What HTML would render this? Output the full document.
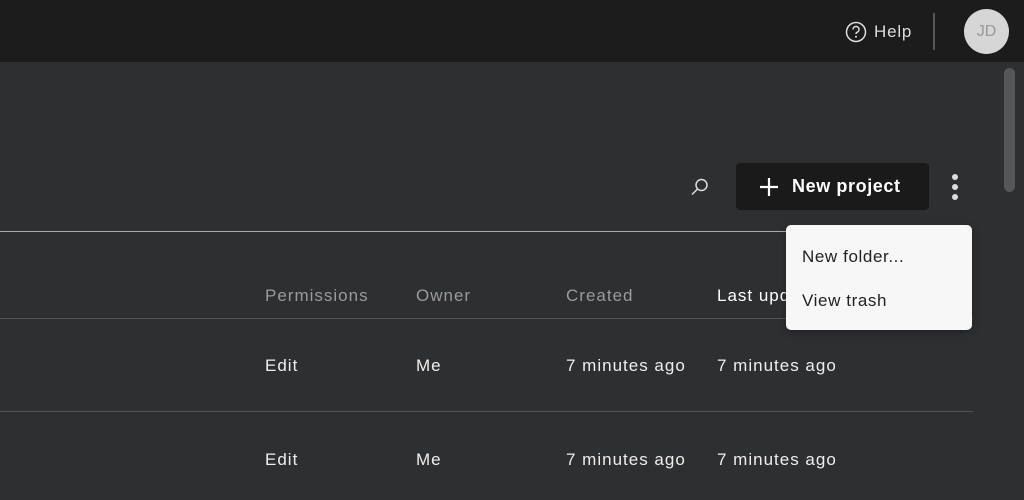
<!DOCTYPE html>
<html><head><style>
*{margin:0;padding:0;box-sizing:border-box}
body{width:1024px;height:500px;background:#2e2f31;font-family:"Liberation Sans",sans-serif;position:relative;overflow:hidden;color:#eee}
.top{position:absolute;left:0;top:0;width:1024px;height:62px;background:#1c1c1c}
.abs{position:absolute;white-space:nowrap}
.line{position:absolute;height:1px}
.t{font-size:17px;letter-spacing:1px}
</style></head><body>
<div class="top"></div>
<svg class="abs" style="left:845px;top:21px" width="22" height="22" viewBox="0 0 22 22"><circle cx="11" cy="11" r="9.5" fill="none" stroke="#ddd" stroke-width="1.5"/><path d="M8 8.5a3 3 0 1 1 4 2.8c-.8.4-1 .9-1 1.7" fill="none" stroke="#ddd" stroke-width="1.5"/><circle cx="11" cy="15.8" r="1" fill="#ddd"/></svg>
<div class="abs t" style="left:874px;top:22px;color:#ddd;letter-spacing:.8px">Help</div>
<div class="line" style="left:933px;top:13px;width:2px;height:37px;background:#555"></div>
<div class="abs" style="left:964px;top:9px;width:45px;height:45px;border-radius:50%;background:#d6d6d6;color:#999;font-size:16px;text-align:center;line-height:45px">JD</div>
<div class="abs" style="left:1004px;top:68px;width:11px;height:124px;border-radius:6px;background:#55575a"></div>
<svg class="abs" style="left:689px;top:176px" width="22" height="22" viewBox="0 0 22 22"><circle cx="12.5" cy="9" r="5.5" fill="none" stroke="#ddd" stroke-width="1.5"/><path d="M8.5 13 L3 18.5" stroke="#ddd" stroke-width="1.5"/></svg>
<div class="abs" style="left:736px;top:163px;width:193px;height:47px;border-radius:4px;background:#1a1a1a"></div>
<svg class="abs" style="left:758px;top:176px" width="22" height="22"><path d="M11 2v18M2 11h18" stroke="#fff" stroke-width="2.2"/></svg>
<div class="abs" style="left:792px;top:176px;font-size:18px;font-weight:bold;color:#fff;letter-spacing:.6px">New project</div>
<div class="abs" style="left:952px;top:174px;width:6px;height:6px;border-radius:50%;background:#ddd"></div>
<div class="abs" style="left:952px;top:184px;width:6px;height:6px;border-radius:50%;background:#ddd"></div>
<div class="abs" style="left:952px;top:194px;width:6px;height:6px;border-radius:50%;background:#ddd"></div>
<div class="line" style="left:0;top:231px;width:790px;background:#aaa"></div>
<div class="abs t" style="left:265px;top:286px;color:#9a9a9a">Permissions</div>
<div class="abs t" style="left:416px;top:286px;color:#9a9a9a">Owner</div>
<div class="abs t" style="left:566px;top:286px;color:#9a9a9a">Created</div>
<div class="abs t" style="left:717px;top:286px;color:#fff">Last updated</div>
<div class="line" style="left:0;top:318px;width:973px;background:#555"></div>
<div class="abs t" style="left:265px;top:356px">Edit</div>
<div class="abs t" style="left:416px;top:356px">Me</div>
<div class="abs t" style="left:566px;top:356px">7 minutes ago</div>
<div class="abs t" style="left:717px;top:356px">7 minutes ago</div>
<div class="line" style="left:0;top:411px;width:973px;background:#555"></div>
<div class="abs t" style="left:265px;top:450px">Edit</div>
<div class="abs t" style="left:416px;top:450px">Me</div>
<div class="abs t" style="left:566px;top:450px">7 minutes ago</div>
<div class="abs t" style="left:717px;top:450px">7 minutes ago</div>
<div class="abs" style="left:786px;top:225px;width:186px;height:105px;border-radius:5px;background:#f7f7f7;box-shadow:0 2px 8px rgba(0,0,0,.3)"></div>
<div class="abs t" style="left:802px;top:247px;color:#222;letter-spacing:.6px">New folder...</div>
<div class="abs t" style="left:802px;top:291px;color:#222;letter-spacing:.6px">View trash</div>
</body></html>
